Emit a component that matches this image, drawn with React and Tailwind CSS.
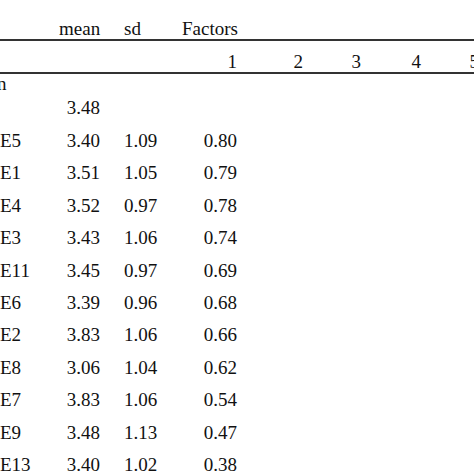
import React from 'react';

const rows = [
  ['E5', '3.40', '1.09', '0.80'],
  ['E1', '3.51', '1.05', '0.79'],
  ['E4', '3.52', '0.97', '0.78'],
  ['E3', '3.43', '1.06', '0.74'],
  ['E11', '3.45', '0.97', '0.69'],
  ['E6', '3.39', '0.96', '0.68'],
  ['E2', '3.83', '1.06', '0.66'],
  ['E8', '3.06', '1.04', '0.62'],
  ['E7', '3.83', '1.06', '0.54'],
  ['E9', '3.48', '1.13', '0.47'],
  ['E13', '3.40', '1.02', '0.38'],
];

const Row = ({ label, mean, sd, f1, f2, f3, f4, f5, className = '' }) => (
  <div className={`flex whitespace-nowrap leading-[20px] ${className}`}>
    <div className="w-[60px] shrink-0 text-left">{label}</div>
    <div className="w-[40px] shrink-0 text-right">{mean}</div>
    <div className="w-[82px] shrink-0 pl-[24px] text-left">{sd}</div>
    <div className="w-[55px] shrink-0 text-right">{f1}</div>
    <div className="w-[66px] shrink-0 text-right">{f2}</div>
    <div className="w-[58px] shrink-0 text-right">{f3}</div>
    <div className="w-[60px] shrink-0 text-right">{f4}</div>
    <div className="w-[58px] shrink-0 text-right">{f5}</div>
  </div>
);

export default function App() {
  return (
    <div className="w-[474px] h-[474px] overflow-hidden bg-white text-[#111] text-[19px] font-['Liberation_Serif',serif]">
      {/* header */}
      <div className="flex whitespace-nowrap leading-[20px] pt-[19px]">
        <div className="w-[59px] shrink-0" />
        <div className="w-[41px] shrink-0 text-right">mean</div>
        <div className="w-[82px] shrink-0 pl-[24px]">sd</div>
        <div className="shrink-0">Factors</div>
      </div>
      <div className="h-[1.5px] bg-[#333]" />
      <Row className="mt-[11.5px]" f1="1" f2="2" f3="3" f4="4" f5="5" />
      <div className="h-[1.5px] bg-[#333]" />

      {/* body */}
      <div className="leading-[20px] mt-[0.5px] -ml-[3px] whitespace-nowrap">n</div>
      <Row className="mt-[4px]" mean="3.48" />
      <div className="mt-[13px]">
        {rows.map((r) => (
          <Row key={r[0]} className="h-[32.4px]" label={r[0]} mean={r[1]} sd={r[2]} f1={r[3]} />
        ))}
      </div>
    </div>
  );
}
